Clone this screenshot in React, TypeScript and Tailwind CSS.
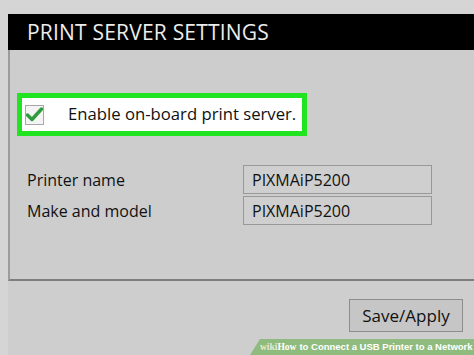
export default function App() {
  return (
    <div className="relative w-[474px] h-[355px] overflow-hidden bg-[#d5d5d5] pt-[14px] pl-[8px]" style={{ fontFamily: '"Open Sans", "Noto Sans", sans-serif' }}>
      <div className="flex flex-col h-full">
        <div className="h-[36px] bg-black flex items-center pl-[19px]">
          <span className="text-[21px] leading-none text-[#ececec] tracking-[0.2px]">PRINT SERVER SETTINGS</span>
        </div>
        <div className="h-[231px] bg-[#cdcdcd] border-l-[2px] border-[#9c9c9c] border-b-[2px] border-b-[#7e7e7e] flex flex-col">
          <div className="ml-[7px] mt-[43px] w-[290px] h-[43px] border-[5px] border-[#1fe41f] bg-white flex items-center">
            <div className="ml-[3px] w-[19px] h-[20px] border border-[#a8a8a8] bg-[#f4f4f4] flex items-center justify-center">
              <svg width="17" height="15" viewBox="0 0 17 15">
                <path d="M1.5 8 L6 12.5 L15.5 2" fill="none" stroke="#2e9b3c" strokeWidth="3.4" strokeLinecap="round" strokeLinejoin="round" />
              </svg>
            </div>
            <span className="ml-[24px] text-[16.7px] leading-none text-[#111] whitespace-nowrap">Enable on-board print server.</span>
          </div>
          <div className="mt-[29px] flex flex-col gap-[2px]">
            <div className="flex items-center">
              <span className="ml-[17px] w-[216px] text-[16px] text-[#111]">Printer name</span>
              <div className="w-[189px] h-[29px] border border-[#999] bg-[#cfcfcf] flex items-center pl-[8px] text-[16px] text-[#111]">PIXMAiP5200</div>
            </div>
            <div className="flex items-center">
              <span className="ml-[17px] w-[216px] text-[16px] text-[#111]">Make and model</span>
              <div className="w-[189px] h-[29px] border border-[#999] bg-[#cfcfcf] flex items-center pl-[8px] text-[16px] text-[#111]">PIXMAiP5200</div>
            </div>
          </div>
        </div>
        <div className="flex-1 bg-[#cecece] flex justify-end items-start pr-[11px] pt-[18px]">
          <div className="w-[114px] h-[33px] border border-[#8c8c8c] bg-[#c6c6c6] flex items-center justify-center text-[17px] text-[#111]">Save/Apply</div>
        </div>
      </div>
      <div className="absolute right-0 bottom-0 h-[16px] w-[224px] bg-[#8fbc7e] [clip-path:polygon(10px_0,100%_0,100%_100%,0_100%)] flex items-center pl-[10px] text-[9.5px] font-bold text-white whitespace-nowrap" style={{ fontFamily: '"Liberation Sans", Arial, sans-serif' }}>
        <span className="text-[#e2ebd9]" style={{ fontFamily: '"Liberation Serif", serif' }}>wiki</span>
        <span style={{ fontFamily: '"Liberation Serif", serif' }}>How</span>
        <span className="ml-[3px]">to Connect a USB Printer to a Network</span>
      </div>
    </div>
  );
}
